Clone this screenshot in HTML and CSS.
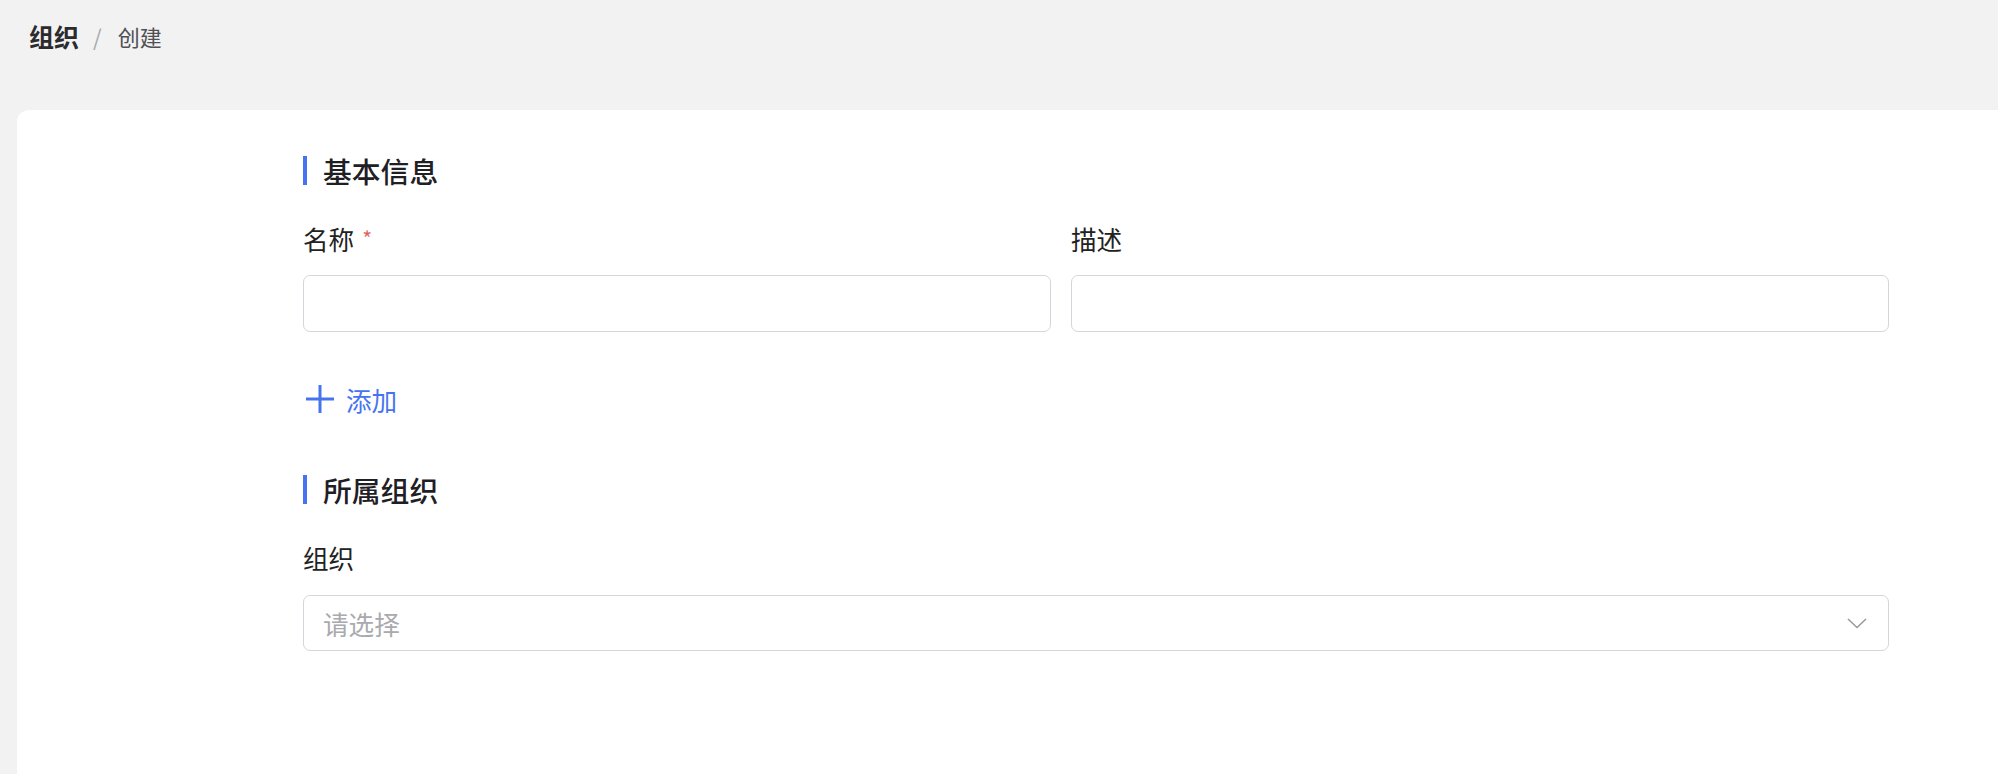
FILE: index.html
```html
<!DOCTYPE html>
<html lang="zh-CN">
<head>
<meta charset="utf-8">
<title>组织 / 创建</title>
<link rel="stylesheet" href="styles.css">
</head>
<body>
<header class="topbar">
  <nav class="breadcrumb">
    <span class="crumb-root">组织</span>
    <span class="crumb-sep">/</span>
    <span class="crumb-current">创建</span>
  </nav>
</header>
<main class="card">
  <section class="section">
    <h2 class="section-title"><span class="bar"></span>基本信息</h2>
    <div class="grid">
      <div class="field-group">
        <label class="label">名称<span class="req">*</span></label>
        <input class="input" type="text">
      </div>
      <div class="field-group">
        <label class="label">描述</label>
        <input class="input" type="text">
      </div>
    </div>
    <button class="add-btn" type="button">
      <svg class="plus" width="28" height="28" viewBox="0 0 28 28"><path d="M14 0V28M0 14H28" stroke="#4674f0" stroke-width="3" fill="none"/></svg>
      <span>添加</span>
    </button>
  </section>
  <section class="section section-2">
    <h2 class="section-title"><span class="bar"></span>所属组织</h2>
    <div class="field-group">
      <label class="label">组织</label>
      <div class="select">
        <span class="placeholder">请选择</span>
        <svg class="chevron" width="20" height="11" viewBox="0 0 20 11"><path d="M1 1L10 9.5L19 1" stroke="#9a9aa0" stroke-width="1.6" fill="none"/></svg>
      </div>
    </div>
  </section>
</main>
</body>
</html>
```
FILE: styles.css
```css
* { box-sizing: border-box; }
html, body { margin: 0; padding: 0; }
body {
  background: #f2f2f2;
  font-family: "Noto Sans CJK SC", "Noto Sans", sans-serif;
  color: #222;
  min-height: 774px;
  overflow: hidden;
}
.topbar {
  height: 72px;
  display: flex;
  align-items: center;
  padding-left: 29px;
  margin-bottom: 38px;
}
.breadcrumb {
  display: flex;
  align-items: center;
  line-height: 36px;
}
.crumb-root {
  font-size: 25px;
  font-weight: 700;
  color: #2b2b2e;
}
.crumb-sep {
  font-size: 22px;
  color: #a8a8ae;
  margin: 0 16px 0 14px;
}
.crumb-current {
  font-size: 22px;
  color: #505055;
}
.card {
  margin-left: 17px;
  background: #fff;
  border-radius: 12px 0 0 0;
  min-height: 664px;
  padding: 40px 110px 40px 286px;
}
.section-title {
  margin: 0;
  height: 40px;
  display: flex;
  align-items: center;
  font-size: 28.8px;
  font-weight: 500;
  color: #1f2024;
}
.bar {
  width: 4px;
  height: 29px;
  background: #4674f0;
  margin-right: 16px;
}
.grid {
  display: grid;
  grid-template-columns: 748px 818px;
  column-gap: 20px;
  margin-top: 31px;
}
.field-group {
  display: flex;
  flex-direction: column;
}
.label {
  font-size: 25.6px;
  line-height: 36px;
  color: #222;
  margin-bottom: 18px;
  display: flex;
  align-items: flex-start;
}
.req {
  color: #e26565;
  font-size: 21px;
  line-height: 34px;
  margin-left: 8px;
}
.input {
  width: 100%;
  height: 57px;
  border: 1.5px solid #d5d5db;
  border-radius: 7px;
  background: #fff;
  outline: none;
  font: inherit;
}
.add-btn {
  margin-top: 47px;
  height: 40px;
  padding: 0 0 0 3px;
  border: 0;
  background: none;
  display: flex;
  align-items: center;
  gap: 12px;
  font-family: inherit;
  font-size: 25.6px;
  color: #4674f0;
  cursor: pointer;
}
.section-2 {
  margin-top: 50px;
}
.section-2 .field-group {
  margin-top: 31px;
}
.section-2 .label {
  margin-bottom: 19px;
}
.select {
  width: 1586px;
  height: 56px;
  border: 1.5px solid #d5d5db;
  border-radius: 7px;
  display: flex;
  align-items: center;
  justify-content: space-between;
  padding: 0 21px 0 19px;
}
.placeholder {
  font-size: 25.6px;
  color: #a9a9ae;
}
.chevron {
  display: block;
}
```
